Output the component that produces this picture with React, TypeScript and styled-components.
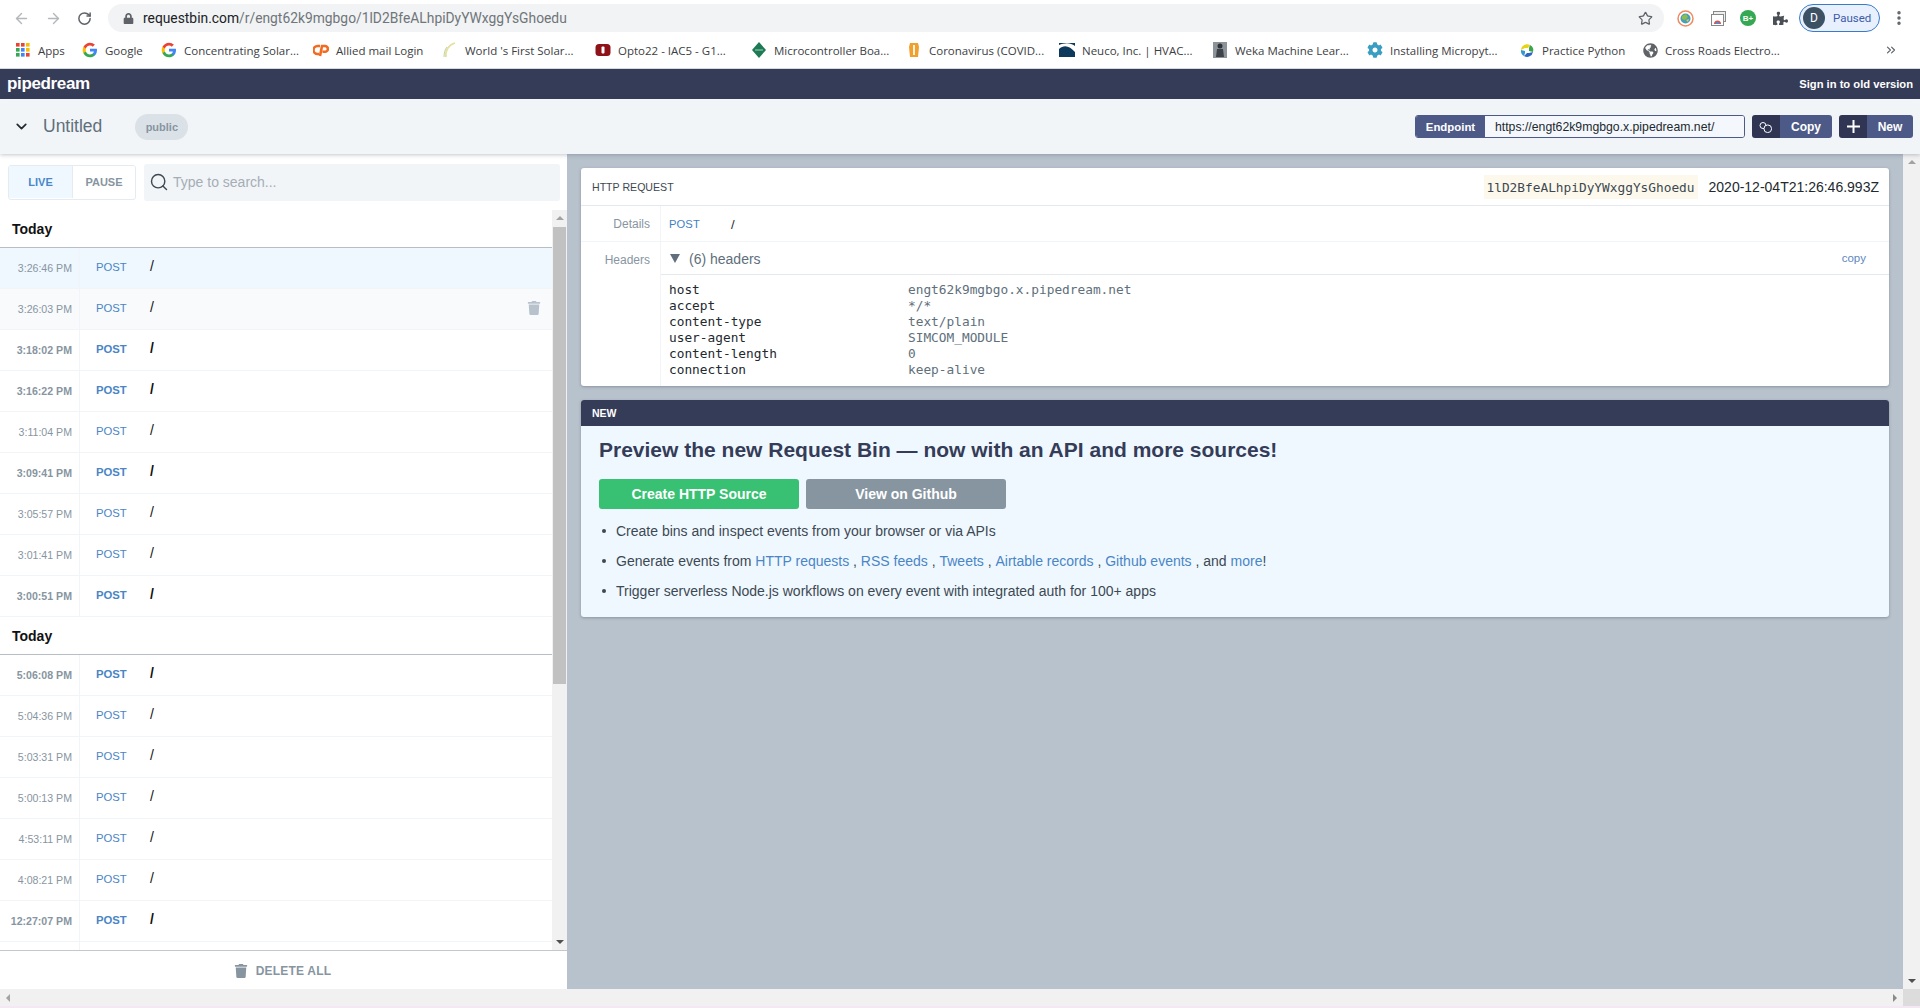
import React from "react";
import styled, { createGlobalStyle } from "styled-components";
import { ArrowLeft, ArrowRight, RotateCw, Star, EllipsisVertical, ChevronDown, Search, ChevronsRight } from "lucide-react";
import { FaLock, FaTrash, FaPuzzlePiece, FaCog, FaGlobeAmericas } from "react-icons/fa";

const Global = createGlobalStyle`
  html, body { margin: 0; padding: 0; height: 100%; overflow: hidden; background: #fff; }
  * { box-sizing: border-box; }
  body { font-family: "Liberation Sans", Arial, sans-serif; color: #22292f; }
`;

const Page = styled.div`
  width: 1920px; height: 1008px; display: flex; flex-direction: column; overflow: hidden;
`;

/* browser chrome */
const TopBar = styled.div`
  height: 32px; display: flex; align-items: flex-start; padding: 4px 0 0 13px; background: #fff; flex: none;
`;
const NavBtn = styled.span<{ $c: string; $w?: number }>`
  width: ${p => p.$w ?? 32}px; height: 28px; display: flex; align-items: center; color: ${p => p.$c};
`;
const Address = styled.div`
  width: 1556px; margin-left: -2px; height: 28px; border-radius: 14px; background: #f1f3f4; display: flex; align-items: center;
  padding-left: 15px; font-family: Roboto, sans-serif; font-size: 13.84px; color: #70757a; position: relative;
  b { font-weight: 400; color: #202124; }
`;
const LockIcon = styled(FaLock)`
  color: #5f6368; font-size: 11px; margin-right: 9px;
`;
const StarWrap = styled.span`
  margin-left: auto; margin-right: 11px; display: flex; color: #5f6368;
`;
const ExtArea = styled.div`
  display: flex; align-items: center; height: 28px; margin-left: 0;
`;
const ExtSlot = styled.span<{ $w: number }>`
  width: ${p => p.$w}px; display: flex; justify-content: center; align-items: center;
`;
const Ext = styled.span`
  width: 16px; height: 16px; border-radius: 50%; background: #34a853; color: #fff; font-size: 8px; font-weight: 700;
  display: flex; align-items: center; justify-content: center;
`;
const PausedPill = styled.div`
  width: 81px; height: 28px; border: 1px solid #3a7bc8; border-radius: 14px; background: #e8f0fe; display: flex; align-items: center;
  padding-left: 2px; font-family: Roboto, sans-serif; font-size: 11.5px; color: #3c5ba8; margin-left: 6px;
`;
const Avatar = styled.span`
  width: 22px; height: 22px; border-radius: 50%; background: #3c5264; color: #fff; font-size: 12px; display: flex;
  align-items: center; justify-content: center; margin-right: 8px; margin-left: 1px;
`;
const Dots = styled.span`
  display: flex; color: #5f6368; margin-left: 10px;
`;

const Bookmarks = styled.div`
  height: 37px; flex: none; display: flex; align-items: center; padding: 0 0 0 15px; background: #fff; border-bottom: 1px solid #d5d8dc;
`;
const Bookmark = styled.div<{ $w: number }>`
  width: ${p => p.$w}px; display: flex; align-items: center; gap: 7px; font-family: "Open Sans", sans-serif; font-size: 11.5px;
  color: #3c4043; white-space: nowrap; flex: none;
  svg { flex: none; }
`;
const More = styled.span`
  margin-left: auto; margin-right: 22px; display: flex; color: #5f6368;
`;

/* site header */
const NavBar = styled.div`
  height: 30px; flex: none; background: #353c58; color: #fff; display: flex; align-items: center; justify-content: space-between; padding: 0 7px;
`;
const Logo = styled.div`
  font-size: 17px; font-weight: 700; letter-spacing: -0.35px;
`;
const SignIn = styled.div`
  font-size: 11.2px; font-weight: 700;
`;
const SubHeader = styled.div`
  height: 55px; flex: none; background: #f1f5f8; display: flex; align-items: center; padding: 0 7px 0 13px; position: relative; z-index: 2;
  box-shadow: 0 1px 4px rgba(60, 70, 90, 0.3);
`;
const Title = styled.div`
  font-size: 17.5px; color: #606f7b; margin: 0 33px 0 13px;
`;
const Pill = styled.div`
  width: 53px; height: 26px; border-radius: 13px; background: #dae1e7; color: #8795a1; font-size: 11px; font-weight: 700;
  display: flex; align-items: center; justify-content: center;
`;
const EndpointGroup = styled.div`
  margin-left: auto; display: flex; height: 23px; align-items: stretch; border-radius: 3px; overflow: hidden; border: 1px solid #4d5a87; width: 330px;
`;
const EndpointLabel = styled.div`
  width: 69px; background: #4d5a87; color: #fff; font-size: 11.4px; font-weight: 700; display: flex; align-items: center; justify-content: center;
`;
const EndpointValue = styled.div`
  flex: 1; background: #f4f8fc; color: #22292f; font-size: 12.25px; display: flex; align-items: center; padding-left: 10px;
`;
const ActionBtn = styled.div<{ $w: number; $ml: number }>`
  width: ${p => p.$w}px; margin-left: ${p => p.$ml}px; height: 23px; display: flex; border-radius: 3px; overflow: hidden; color: #fff; font-size: 12px; font-weight: 700;
`;
const ActionIcon = styled.span`
  width: 28px; background: #2f3553; display: flex; align-items: center; justify-content: center;
`;
const ActionText = styled.span`
  flex: 1; background: #4d5a87; display: flex; align-items: center; justify-content: center;
`;

/* body */
const Body = styled.div`
  height: 835px; flex: none; display: flex;
`;
const Left = styled.div`
  width: 567px; flex: none; background: #fff; display: flex; flex-direction: column;
`;
const Toolbar = styled.div`
  height: 51px; flex: none; display: flex; align-items: flex-start; padding: 10px 7px 0 8px; gap: 8px;
`;
const Toggle = styled.div`
  width: 128px; height: 35px; margin-top: 1px; padding-bottom: 1px; display: flex; border: 1px solid #e4ebf1; border-radius: 3px; overflow: hidden; flex: none; font-size: 11px; font-weight: 700;
`;
const ToggleLive = styled.div`
  width: 63px; background: #eff8ff; color: #4a87c9; display: flex; align-items: center; justify-content: center;
`;
const TogglePause = styled.div`
  flex: 1; background: #fff; color: #8795a1; display: flex; align-items: center; justify-content: center; border-left: 1px solid #e4ebf1;
`;
const SearchBox = styled.div`
  flex: 1; height: 37px; background: #f1f5f8; border-radius: 3px; display: flex; align-items: center; padding: 0 0 1px 5px; gap: 4px;
  color: #a5adb5; font-size: 14px;
  svg { color: #3d4852; }
`;
const ListArea = styled.div`
  flex: 1; min-height: 0; display: flex; padding-top: 5px;
`;
const List = styled.div`
  width: 552px; flex: none; overflow: hidden;
`;
const DayHead = styled.div`
  height: 38px; padding: 0 0 0 12px; display: flex; align-items: center; font-size: 14px; font-weight: 700; color: #111; border-bottom: 1px solid #b8bec6;
`;
const Row = styled.div<{ $bg?: string }>`
  height: 41px; display: flex; background: ${p => p.$bg ?? "#fff"}; border-bottom: 1px solid #f1f5f8; position: relative;
`;
const Time = styled.div<{ $b?: boolean }>`
  width: 80px; flex: none; border-right: 1px solid #f1f5f8; padding-right: 7px; text-align: right; line-height: 41px; font-size: 10.6px;
  color: #8795a1; font-weight: ${p => (p.$b ? 700 : 400)};
`;
const Method = styled.div<{ $b?: boolean }>`
  width: 70px; padding-left: 16px; flex: none; line-height: 38px; font-size: 11.3px; color: #4a85c5; font-weight: ${p => (p.$b ? 700 : 400)};
`;
const Slash = styled.div<{ $b?: boolean }>`
  line-height: 37px; font-size: 14px; color: #111; font-weight: ${p => (p.$b ? 700 : 400)};
`;
const RowTrash = styled(FaTrash)`
  margin-left: auto; margin-right: 11px; margin-top: 12px; color: #b8c2cc; font-size: 14px;
`;
const ScrollV = styled.div<{ $w: number }>`
  width: ${p => p.$w}px; flex: none; background: #f1f1f1; display: flex; flex-direction: column; align-items: center; justify-content: space-between; position: relative;
  padding: 6px 0;
`;
const Thumb = styled.div`
  position: absolute; top: 17px; left: 1px; width: 13px; height: 457px; background: #c1c1c1;
`;
const ArrowUp = styled.span`
  width: 0; height: 0; border: 4px solid transparent; border-top: 0; border-bottom: 4px solid #a3a3a3;
`;
const ArrowDown = styled.span`
  width: 0; height: 0; border: 4px solid transparent; border-bottom: 0; border-top: 4px solid #505050;
`;
const DeleteBar = styled.div`
  height: 39px; flex: none; border-top: 1px solid #c4c8cc; display: flex; align-items: center; justify-content: center; gap: 8px;
  color: #8795a1; font-size: 12px; font-weight: 700; padding: 2px 2px 0 0; letter-spacing: 0.2px;
`;

const Main = styled.div`
  flex: 1; min-width: 0; background: #b8c2cc; padding: 14px 14px 0; display: flex; flex-direction: column; gap: 14px;
`;
const Card = styled.div`
  background: #fff; border-radius: 3px; box-shadow: 0 1px 3px rgba(50, 60, 80, 0.35); overflow: hidden;
`;
const CardHead = styled.div`
  height: 38px; display: flex; align-items: center; padding: 1px 10px 0 11px; border-bottom: 1px solid #e4e9ee;
`;
const CardTitle = styled.div`
  font-size: 10.6px; color: #3d4852; margin-right: auto;
`;
const IdBadge = styled.div`
  font-family: "DejaVu Sans Mono", monospace; font-size: 12.8px; background: #fcf9ec; color: #3d4852; height: 24px; display: flex; align-items: center; padding: 0 3px;
`;
const Stamp = styled.div`
  font-size: 14px; color: #22292f; margin-left: 11px;
`;
const DetailRow = styled.div`
  height: 36px; display: flex; border-bottom: 1px solid #f1f5f8;
`;
const RowLabel = styled.div`
  width: 80px; flex: none; border-right: 1px solid #f1f5f8; padding-right: 10px; text-align: right; font-size: 12px; color: #8795a1; line-height: 37px;
`;
const DetailMethod = styled.div`
  width: 62px; margin-left: 8px; font-size: 11.2px; color: #3f7fc4; line-height: 37px; letter-spacing: .1px;
`;
const DetailSlash = styled.div`
  font-size: 13px; color: #22292f; line-height: 37px;
`;
const HeadersWrap = styled.div`
  flex: 1; min-width: 0; display: flex; flex-direction: column;
`;
const HeadersBlock = styled.div`
  display: flex; height: 144px;
`;
const HeaderToggle = styled.div`
  height: 33px; display: flex; align-items: center; padding: 1px 23px 0 9px; border-bottom: 1px solid #e4e9ee; color: #606f7b; font-size: 14px;
`;
const Caret = styled.span`
  width: 0; height: 0; border: 5px solid transparent; border-bottom: 0; border-top: 9px solid #606f7b; margin-right: 9px;
`;
const CopyLink = styled.span`
  margin-left: auto; margin-bottom: 2px; color: #5d87c0; font-size: 11.5px;
`;
const HeaderTable = styled.div`
  display: grid; grid-template-columns: 239px 1fr; grid-auto-rows: 16px; padding: 7px 0 0 8px;
  font-family: "DejaVu Sans Mono", monospace; font-size: 12.8px; line-height: 16px;
`;
const HKey = styled.div`
  color: #22292f;
`;
const HVal = styled.div`
  color: #606f7b;
`;
const NewCard = styled.div`
  background: #eff8ff; border-radius: 3px; box-shadow: 0 1px 3px rgba(50, 60, 80, 0.35); overflow: hidden; height: 217px;
`;
const NewHead = styled.div`
  height: 26px; background: #353c58; color: #fff; font-size: 10.5px; font-weight: 700; display: flex; align-items: center; padding-left: 11px;
`;
const NewBody = styled.div`
  padding: 10px 18px 0;
`;
const NewTitle = styled.div`
  font-size: 21px; line-height: 27px; font-weight: 700; color: #353c58;
`;
const Buttons = styled.div`
  display: flex; gap: 7px; margin-top: 16px;
`;
const Btn = styled.div<{ $bg: string }>`
  width: 200px; height: 30px; background: ${p => p.$bg}; border-radius: 3px; color: #fff; font-size: 14px; font-weight: 700;
  display: flex; align-items: center; justify-content: center;
`;
const Bullets = styled.ul`
  list-style: none; margin: 7.5px 0 0; padding: 0;
`;
const Bullet = styled.li`
  height: 29.9px; display: flex; align-items: center; font-size: 14px; color: #3d4852; white-space: pre;
  &::before { content: ""; width: 4px; height: 4px; border-radius: 50%; background: #3d4852; margin: 0 10px 0 3px; }
  a { color: #4a85c5; }
`;
const ScrollH = styled.div`
  height: 17px; flex: none; background: #f1f1f1; display: flex; align-items: center; padding-left: 6px;
`;
const ArrowL = styled.span`
  width: 0; height: 0; border: 4px solid transparent; border-left: 0; border-right: 4px solid #a3a3a3;
`;
const ArrowR = styled.span`
  width: 0; height: 0; border: 4px solid transparent; border-right: 0; border-left: 4px solid #8a8a8a; margin-left: auto; margin-right: 6px;
`;
const Corner = styled.span`
  width: 17px; height: 17px; background: #dcdcdc;
`;
const Strip = styled.div`
  height: 2px; flex: none; background: #f3e8f3;
`;

/* favicons */
const G = () => (
  <svg width="16" height="16" viewBox="0 0 48 48">
    <path fill="#4285F4" d="M45 24.5c0-1.6-.1-3.100-.4-4.500H24v8.500h11.800c-.5 2.800-2 5.100-4.400 6.700v5.600h7.100C42.700 36.900 45 31.200 45 24.500z" />
    <path fill="#34A853" d="M24 46c5.900 0 10.900-2 14.500-5.300l-7.100-5.600c-2 1.300-4.500 2.100-7.400 2.100-5.700 0-10.500-3.800-12.200-9H4.500v5.700C8.100 41 15.500 46 24 46z" />
    <path fill="#FBBC05" d="M11.800 28.200c-.4-1.300-.7-2.700-.7-4.200s.3-2.900.7-4.200v-5.700H4.500C3 17 2 20.400 2 24s1 7 2.500 9.900l7.300-5.700z" />
    <path fill="#EA4335" d="M24 10.800c3.200 0 6.100 1.100 8.400 3.300l6.300-6.300C34.900 4.200 29.900 2 24 2 15.500 2 8.100 7 4.500 14.100l7.300 5.700c1.700-5.200 6.500-9 12.200-9z" />
  </svg>
);
const AppsIcon = () => (
  <svg width="16" height="16" viewBox="0 0 16 16">
    {[["#ea4335", "#ea4335", "#fbbc05"], ["#34a853", "#4285f4", "#fbbc05"], ["#34a853", "#4285f4", "#ea4335"]].map((r, y) =>
      r.map((c, x) => <rect key={`${x}${y}`} x={1 + x * 5} y={1 + y * 5} width="3.6" height="3.6" fill={c} />)
    )}
  </svg>
);
const CpIcon = () => (
  <svg width="16" height="16" viewBox="0 0 16 16">
    <path d="M7 4H4.500a3.500 3.500 0 0 0 0 8H6" fill="none" stroke="#f26b21" strokeWidth="2.600" />
    <path d="M7 14l2-10h3a2.800 2.800 0 0 1 0 5.800H9.500" fill="none" stroke="#f26b21" strokeWidth="2.600" />
  </svg>
);
const WorldIcon = () => (
  <svg width="16" height="16" viewBox="0 0 16 16">
    <path d="M4 15C3 9 6 3 13 1" fill="none" stroke="#e7dfa0" strokeWidth="1.800" />
    <path d="M2 15C2 11 3 7 5 5" fill="none" stroke="#b6d7a8" strokeWidth="1" />
  </svg>
);
const OptoIcon = () => (
  <svg width="16" height="16" viewBox="0 0 16 16">
    <rect x="0.500" y="2" width="15" height="12" rx="3.500" fill="#8e1218" />
    <rect x="6.500" y="4.500" width="3" height="7" rx="1" fill="#fff" />
  </svg>
);
const MicroIcon = () => (
  <svg width="16" height="16" viewBox="0 0 16 16">
    <path d="M8 0l7 8-7 8-7-8z" fill="#1d7a55" />
    <path d="M4 8h8" stroke="#9ed3bb" strokeWidth="1" />
  </svg>
);
const CoronaIcon = () => (
  <svg width="16" height="16" viewBox="0 0 16 16">
    <path d="M4 1h8l1 4-1 10H4L3 5z" fill="#f0a030" />
    <path d="M8 3v10" stroke="#fff3d6" strokeWidth="2" />
  </svg>
);
const NeucoIcon = () => (
  <svg width="16" height="16" viewBox="0 0 16 16">
    <rect y="1" width="16" height="14" fill="#0d3a5c" />
    <path d="M0 7C5 2 11 4 16 10V4C11 0 5 1 0 3z" fill="#fff" />
  </svg>
);
const WekaIcon = () => (
  <svg width="16" height="16" viewBox="0 0 16 16">
    <rect x="1" y="0" width="14" height="16" fill="#8d9499" />
    <circle cx="8" cy="4" r="2.500" fill="#2e3338" />
    <path d="M4 15l1-8h6l1 8z" fill="#3d4348" />
  </svg>
);
const PythonIcon = () => (
  <svg width="16" height="16" viewBox="0 0 16 16">
    <path d="M2 8a6 6 0 0 1 9-5L9 6H6z" fill="#e8d417" />
    <path d="M11 3a6 6 0 0 1 3 7l-4-1V6z" fill="#3aa64a" />
    <path d="M14 10a6 6 0 0 1-9 4l3-3h2z" fill="#2b66c4" />
    <path d="M5 14a6 6 0 0 1-3-6l4 1v2z" fill="#2f9ad0" />
  </svg>
);
const ExtGlobe = () => (
  <svg width="17" height="17" viewBox="0 0 17 17">
    <circle cx="8.500" cy="8.500" r="7.500" fill="#fff" stroke="#ef8a62" strokeWidth="1.500" />
    <circle cx="8.500" cy="8.500" r="5" fill="#45a0b8" />
    <path d="M5 6l4-2 2 3-3 3-3-1z" fill="#8fbc4a" />
    <path d="M9 10l3-1-1 3z" fill="#e6c84a" />
  </svg>
);
const ExtDoc = () => (
  <svg width="17" height="17" viewBox="0 0 17 17">
    <rect x="3.500" y="1.500" width="12" height="10" fill="#eee" stroke="#888" />
    <rect x="1.500" y="4.500" width="12" height="11" fill="#fff" stroke="#888" />
    <path d="M4 14a3.500 3.500 0 0 1 7 0z" fill="#d9534f" />
    <path d="M5.500 14a2 2 0 0 1 4 0z" fill="#4a90d9" />
  </svg>
);
const LinksIcon = () => (
  <svg width="14" height="14" viewBox="0 0 14 14" fill="none" stroke="#fff" strokeWidth="1">
    <path d="M5 8.500H4a3 3 0 1 1 3-3" />
    <rect x="5" y="5" width="7.500" height="7.500" rx="3.500" />
  </svg>
);
const PlusIcon = () => (
  <svg width="13" height="13" viewBox="0 0 13 13">
    <path d="M6.500 0v13M0 6.500h13" stroke="#fff" strokeWidth="2" />
  </svg>
);

const bookmarks: [number, React.ReactNode, string][] = [
  [67, <AppsIcon />, "Apps"],
  [79, <G />, "Google"],
  [152, <G />, "Concentrating Solar..."],
  [129, <CpIcon />, "Allied mail Login"],
  [153, <WorldIcon />, "World 's First Solar..."],
  [156, <OptoIcon />, "Opto22 - IAC5 - G1..."],
  [155, <MicroIcon />, "Microcontroller Boa..."],
  [153, <CoronaIcon />, "Coronavirus (COVID..."],
  [153, <NeucoIcon />, "Neuco, Inc. | HVAC..."],
  [155, <WekaIcon />, "Weka Machine Lear..."],
  [152, <FaCog size={16} color="#3a9ec2" />, "Installing Micropyt..."],
  [124, <PythonIcon />, "Practice Python"],
  [150, <FaGlobeAmericas size={15} color="#5f6368" />, "Cross Roads Electro..."],
];

const day1: [string, boolean][] = [
  ["3:26:46 PM", false], ["3:26:03 PM", false], ["3:18:02 PM", true], ["3:16:22 PM", true], ["3:11:04 PM", false],
  ["3:09:41 PM", true], ["3:05:57 PM", false], ["3:01:41 PM", false], ["3:00:51 PM", true],
];
const day2: [string, boolean][] = [
  ["5:06:08 PM", true], ["5:04:36 PM", false], ["5:03:31 PM", false], ["5:00:13 PM", false],
  ["4:53:11 PM", false], ["4:08:21 PM", false], ["12:27:07 PM", true],
];
const headers = [
  ["host", "engt62k9mgbgo.x.pipedream.net"], ["accept", "*/*"], ["content-type", "text/plain"],
  ["user-agent", "SIMCOM_MODULE"], ["content-length", "0"], ["connection", "keep-alive"],
];

const ReqRow = ({ t, b, i }: { t: string; b: boolean; i?: number }) => (
  <Row $bg={i === 0 ? "#eff8ff" : i === 1 ? "#f8fafc" : undefined}>
    <Time $b={b}>{t}</Time>
    <Method $b={b}>POST</Method>
    <Slash $b={b}>/</Slash>
    {i === 1 && <RowTrash />}
  </Row>
);

export default function App() {
  return (
    <Page>
      <Global />
      <TopBar>
        <NavBtn $c="#b4b7bb"><ArrowLeft size={17} /></NavBtn>
        <NavBtn $c="#b4b7bb"><ArrowRight size={17} /></NavBtn>
        <NavBtn $c="#5f6368" $w={33}><RotateCw size={15} strokeWidth={2.4} /></NavBtn>
        <Address>
          <LockIcon />
          <span><b>requestbin.com</b>/r/engt62k9mgbgo/1lD2BfeALhpiDyYWxggYsGhoedu</span>
          <StarWrap><Star size={15} /></StarWrap>
        </Address>
        <ExtArea>
          <ExtSlot $w={43}><ExtGlobe /></ExtSlot>
          <ExtSlot $w={22}><ExtDoc /></ExtSlot>
          <ExtSlot $w={38}><Ext>B+</Ext></ExtSlot>
          <ExtSlot $w={26}><FaPuzzlePiece size={15} color="#4a4f55" /></ExtSlot>
          <PausedPill><Avatar>D</Avatar>Paused</PausedPill>
          <Dots><EllipsisVertical size={18} strokeWidth={2.6} /></Dots>
        </ExtArea>
      </TopBar>
      <Bookmarks>
        {bookmarks.map(([w, icon, label]) => (
          <Bookmark key={label} $w={w}>{icon}{label}</Bookmark>
        ))}
        <More><ChevronsRight size={14} /></More>
      </Bookmarks>
      <NavBar>
        <Logo>pipedream</Logo>
        <SignIn>Sign in to old version</SignIn>
      </NavBar>
      <SubHeader>
        <ChevronDown size={17} strokeWidth={2.4} color="#22292f" />
        <Title>Untitled</Title>
        <Pill>public</Pill>
        <EndpointGroup>
          <EndpointLabel>Endpoint</EndpointLabel>
          <EndpointValue>https://engt62k9mgbgo.x.pipedream.net/</EndpointValue>
        </EndpointGroup>
        <ActionBtn $w={80} $ml={7}>
          <ActionIcon><LinksIcon /></ActionIcon>
          <ActionText>Copy</ActionText>
        </ActionBtn>
        <ActionBtn $w={74} $ml={7}>
          <ActionIcon><PlusIcon /></ActionIcon>
          <ActionText>New</ActionText>
        </ActionBtn>
      </SubHeader>
      <Body>
        <Left>
          <Toolbar>
            <Toggle>
              <ToggleLive>LIVE</ToggleLive>
              <TogglePause>PAUSE</TogglePause>
            </Toggle>
            <SearchBox><Search size={20} strokeWidth={1.7} />Type to search...</SearchBox>
          </Toolbar>
          <ListArea>
            <List>
              <DayHead>Today</DayHead>
              {day1.map(([t, b], i) => <ReqRow key={t} t={t} b={b} i={i} />)}
              <DayHead>Today</DayHead>
              {day2.map(([t, b]) => <ReqRow key={t} t={t} b={b} />)}
              <Row><Time /></Row>
            </List>
            <ScrollV $w={15}>
              <Thumb />
              <ArrowUp />
              <ArrowDown />
            </ScrollV>
          </ListArea>
          <DeleteBar><FaTrash size={14} />DELETE ALL</DeleteBar>
        </Left>
        <Main>
          <Card>
            <CardHead>
              <CardTitle>HTTP REQUEST</CardTitle>
              <IdBadge>1lD2BfeALhpiDyYWxggYsGhoedu</IdBadge>
              <Stamp>2020-12-04T21:26:46.993Z</Stamp>
            </CardHead>
            <DetailRow>
              <RowLabel>Details</RowLabel>
              <DetailMethod>POST</DetailMethod>
              <DetailSlash>/</DetailSlash>
            </DetailRow>
            <HeadersBlock>
              <RowLabel>Headers</RowLabel>
              <HeadersWrap>
                <HeaderToggle><Caret />(6) headers<CopyLink>copy</CopyLink></HeaderToggle>
                <HeaderTable>
                  {headers.map(([k, v]) => (
                    <React.Fragment key={k}>
                      <HKey>{k}</HKey>
                      <HVal>{v}</HVal>
                    </React.Fragment>
                  ))}
                </HeaderTable>
              </HeadersWrap>
            </HeadersBlock>
          </Card>
          <NewCard>
            <NewHead>NEW</NewHead>
            <NewBody>
              <NewTitle>Preview the new Request Bin — now with an API and more sources!</NewTitle>
              <Buttons>
                <Btn $bg="#38c172">Create HTTP Source</Btn>
                <Btn $bg="#8795a1">View on Github</Btn>
              </Buttons>
              <Bullets>
                <Bullet>Create bins and inspect events from your browser or via APIs</Bullet>
                <Bullet>Generate events from <a>HTTP requests</a> , <a>RSS feeds</a> , <a>Tweets</a> , <a>Airtable records</a> , <a>Github events</a> , and <a>more</a>!</Bullet>
                <Bullet>Trigger serverless Node.js workflows on every event with integrated auth for 100+ apps</Bullet>
              </Bullets>
            </NewBody>
          </NewCard>
        </Main>
        <ScrollV $w={17}>
          <ArrowUp />
          <ArrowDown />
        </ScrollV>
      </Body>
      <ScrollH>
        <ArrowL />
        <ArrowR />
        <Corner />
      </ScrollH>
      <Strip />
    </Page>
  );
}
